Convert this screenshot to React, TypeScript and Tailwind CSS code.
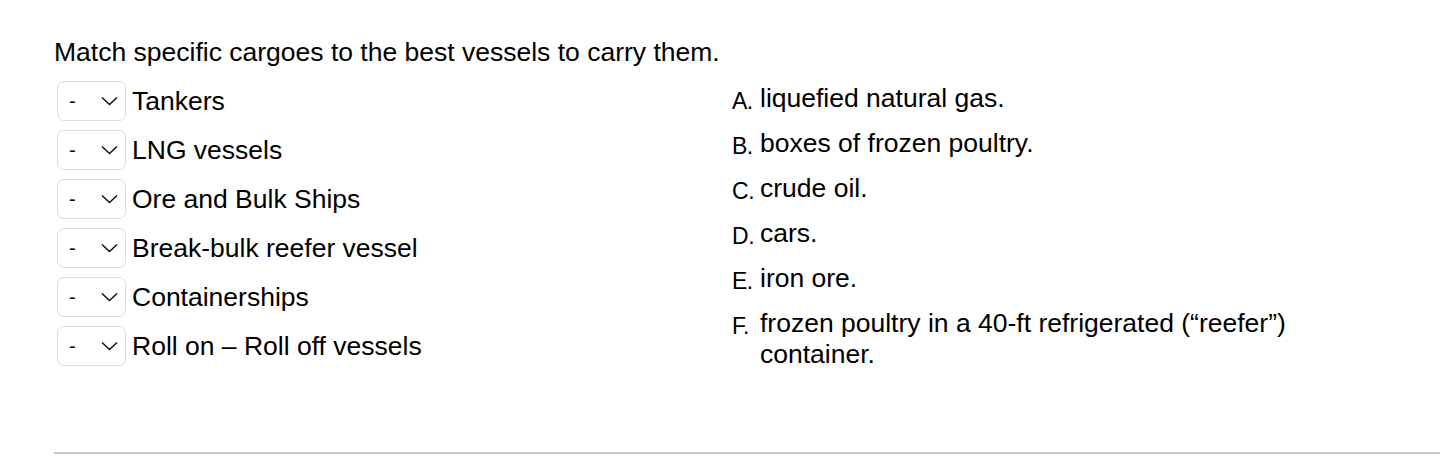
const VESSELS = [
  "Tankers",
  "LNG vessels",
  "Ore and Bulk Ships",
  "Break-bulk reefer vessel",
  "Containerships",
  "Roll on – Roll off vessels",
];

const CARGOES = [
  { key: "A", text: "liquefied natural gas." },
  { key: "B", text: "boxes of frozen poultry." },
  { key: "C", text: "crude oil." },
  { key: "D", text: "cars." },
  { key: "E", text: "iron ore." },
  { key: "F", text: "frozen poultry in a 40-ft refrigerated (“reefer”) container." },
];

function MatchSelect() {
  return (
    <div className="relative h-[40px] w-[69px] shrink-0">
      <select
        defaultValue="-"
        className="h-full w-full appearance-none rounded-[7px] border border-[#dcdcdc] bg-white pl-[11px] text-[20px] text-black outline-none"
      >
        <option value="-">-</option>
        {CARGOES.map((c) => (
          <option key={c.key} value={c.key}>
            {c.key}
          </option>
        ))}
      </select>
      <svg
        className="pointer-events-none absolute right-[8px] top-[15px]"
        width="17"
        height="10"
        viewBox="0 0 17 10"
        fill="none"
      >
        <path d="M1 1.5 8.5 8.5 16 1.5" stroke="#111" strokeWidth="1.5" />
      </svg>
    </div>
  );
}

export default function App() {
  return (
    <div className="min-h-screen bg-white font-['Liberation_Sans',Arial,sans-serif] text-black">
      <div className="pl-[54px] pt-[37px]">
        <p className="text-[26.5px] leading-[30px]">Match specific cargoes to the best vessels to carry them.</p>

        <div className="mt-[14px] flex">
          <div className="ml-[3px] flex w-[675px] flex-col gap-[9px]">
            {VESSELS.map((v) => (
              <div key={v} className="flex items-center gap-[6px]">
                <MatchSelect />
                <span className="text-[26.5px] leading-[31px]">{v}</span>
              </div>
            ))}
          </div>

          <div className="mt-[2px] flex flex-col gap-[13px]">
            {CARGOES.map((c) => (
              <div key={c.key} className="flex items-baseline">
                <span className="relative top-[2px] w-[28px] shrink-0 text-[23px] leading-[31px] tracking-[-0.5px]">
                  {c.key}.
                </span>
                <span className="w-[560px] text-[26.5px] leading-[31px]">{c.text}</span>
              </div>
            ))}
          </div>
        </div>
      </div>

      <div className="ml-[54px] mt-[82px] h-[2px] bg-[#cccccc]" />
    </div>
  );
}
